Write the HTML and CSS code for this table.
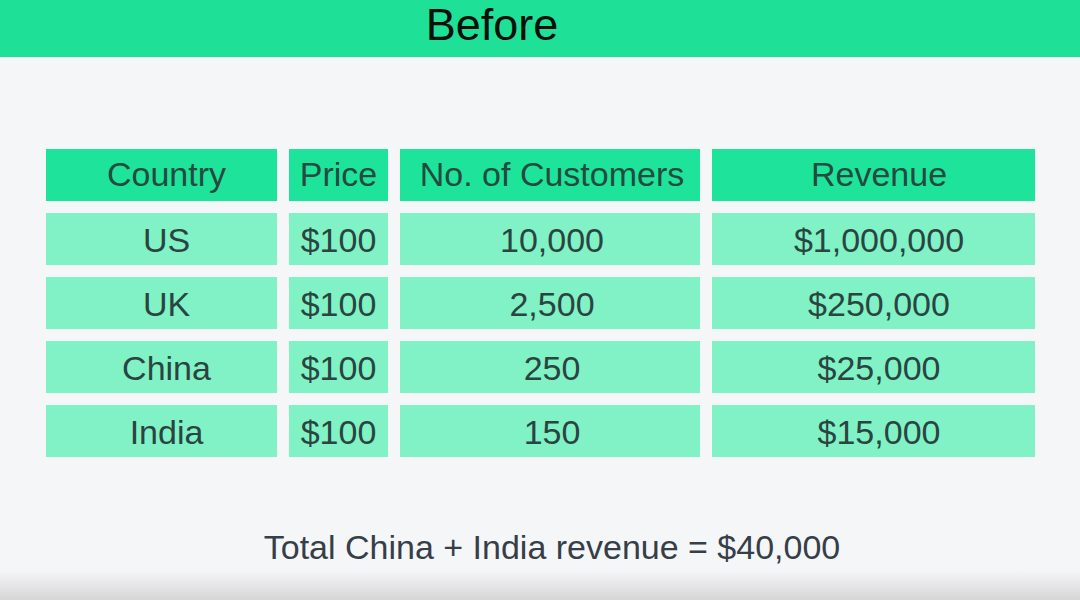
FILE: index.html
```html
<!DOCTYPE html>
<html>
<head>
<meta charset="utf-8">
<link rel="stylesheet" href="styles.css">
</head>
<body>
<header class="topbar">Before</header>
<main class="content">
  <div class="table">
    <div class="cell head c1">Country</div>
    <div class="cell head c2">Price</div>
    <div class="cell head c3">No. of Customers</div>
    <div class="cell head c4">Revenue</div>

    <div class="cell c1">US</div>
    <div class="cell c2">$100</div>
    <div class="cell c3">10,000</div>
    <div class="cell c4">$1,000,000</div>

    <div class="cell c1">UK</div>
    <div class="cell c2">$100</div>
    <div class="cell c3">2,500</div>
    <div class="cell c4">$250,000</div>

    <div class="cell c1">China</div>
    <div class="cell c2">$100</div>
    <div class="cell c3">250</div>
    <div class="cell c4">$25,000</div>

    <div class="cell c1">India</div>
    <div class="cell c2">$100</div>
    <div class="cell c3">150</div>
    <div class="cell c4">$15,000</div>
  </div>
  <p class="total">Total China + India revenue = $40,000</p>
</main>
<div class="fade"></div>
</body>
</html>
```

FILE: styles.css
```css
html, body {
  margin: 0;
  padding: 0;
}
body {
  width: 1080px;
  height: 600px;
  background: #f5f6f8;
  font-family: "Liberation Sans", Arial, sans-serif;
  display: flex;
  flex-direction: column;
  overflow: hidden;
}
.topbar {
  height: 49px;
  padding-bottom: 8px;
  padding-left: 2px;
  line-height: 49px;
  background: #1ee197;
  color: #0b0f0c;
  font-size: 45px;
  text-align: center;
  padding-right: 98px;
}
.content {
  display: flex;
  flex-direction: column;
}
.table {
  margin-top: 92px;
  margin-left: 46px;
  display: grid;
  grid-template-columns: 231px 99px 300px 323px;
  grid-auto-rows: 52px;
  gap: 12px;
}
.cell {
  box-sizing: border-box;
  padding-top: 3px;
  line-height: 48px;
  font-size: 34px;
  text-align: center;
  color: #2a4440;
  background: #80f2c6;
  white-space: nowrap;
}
.cell.head {
  padding-top: 1px;
  background: #1ee49b;
  color: #254a3e;
}
.c1 { padding-left: 10px; }
.c3 { padding-left: 4px; }
.c4 { padding-left: 11px; }
.total {
  margin: 70px 0 0 0;
  padding-left: 24px;
  line-height: 40px;
  font-size: 34px;
  text-align: center;
  color: #363e47;
}
.fade {
  margin-top: auto;
  height: 30px;
  background: linear-gradient(to bottom, #f5f6f8 0%, #e6e6e8 50%, #d6d6d6 100%);
}
```
